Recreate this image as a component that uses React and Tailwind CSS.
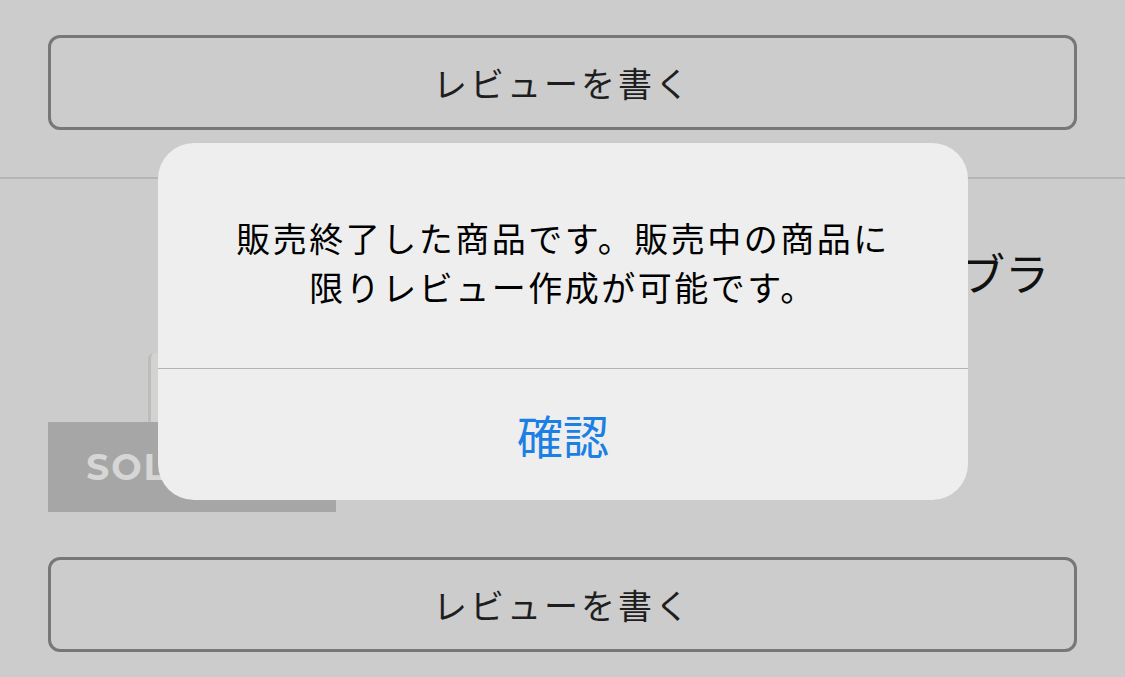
const jp = "font-['Noto_Sans_CJK_JP','Noto_Sans',sans-serif]";

function ReviewButton() {
  return (
    <button
      type="button"
      className="flex h-[95px] w-full items-center justify-center rounded-[12px] border-[3px] border-[#777777] text-[34px] tracking-[3px] text-[#1e1e1e]"
    >
      レビューを書く
    </button>
  );
}

function ProductRow() {
  return (
    <div className="flex gap-[32px] px-[48px] pt-[45px]">
      <div className="relative h-[288px] w-[288px] shrink-0">
        <div className="absolute left-[100px] top-[129px] h-[130px] w-[170px] rounded-tl-[6px] border-l-[3px] border-[#bdbdbb] bg-[#d3d3d1]" />
        <div className="absolute bottom-0 left-0 flex h-[90px] w-full items-center justify-center bg-[#a6a6a6]">
          <span className="font-['Montserrat','Open_Sans',sans-serif] text-[36px] font-bold tracking-[2px] text-[#d6d6d6]">
            SOLD OUT
          </span>
        </div>
      </div>
      <div className="min-w-0 flex-1 overflow-hidden pr-[28px] pt-[20px]">
        <p className="whitespace-nowrap text-right text-[44px] leading-[56px] text-[#111111]">
          ノンワイヤー育乳ナイトブラ
        </p>
      </div>
    </div>
  );
}

function Alert() {
  return (
    <div className="absolute left-[158px] top-[143px] w-[810px] overflow-hidden rounded-[36px] bg-[#eeeeee]">
      <div className="h-[225px] pt-[70px] text-center text-[34px] leading-[49px] tracking-[2.5px] whitespace-nowrap text-black">
        販売終了した商品です。販売中の商品に
        <br />
        限りレビュー作成が可能です。
      </div>
      <div className="h-px bg-[#b3b3b3]" />
      <button
        type="button"
        className="flex h-[131px] w-full items-center justify-center text-[46px] text-[#1b7fe3]"
      >
        確認
      </button>
    </div>
  );
}

export default function App() {
  return (
    <div className={`relative h-[677px] w-[1125px] overflow-hidden bg-[#cccccc] ${jp}`}>
      <div className="px-[48px] pt-[35px]">
        <ReviewButton />
      </div>
      <div className="mt-[47px] h-[2px] bg-[#b5b5b5]" />
      <ProductRow />
      <div className="px-[48px] pt-[45px]">
        <ReviewButton />
      </div>
      <Alert />
    </div>
  );
}
